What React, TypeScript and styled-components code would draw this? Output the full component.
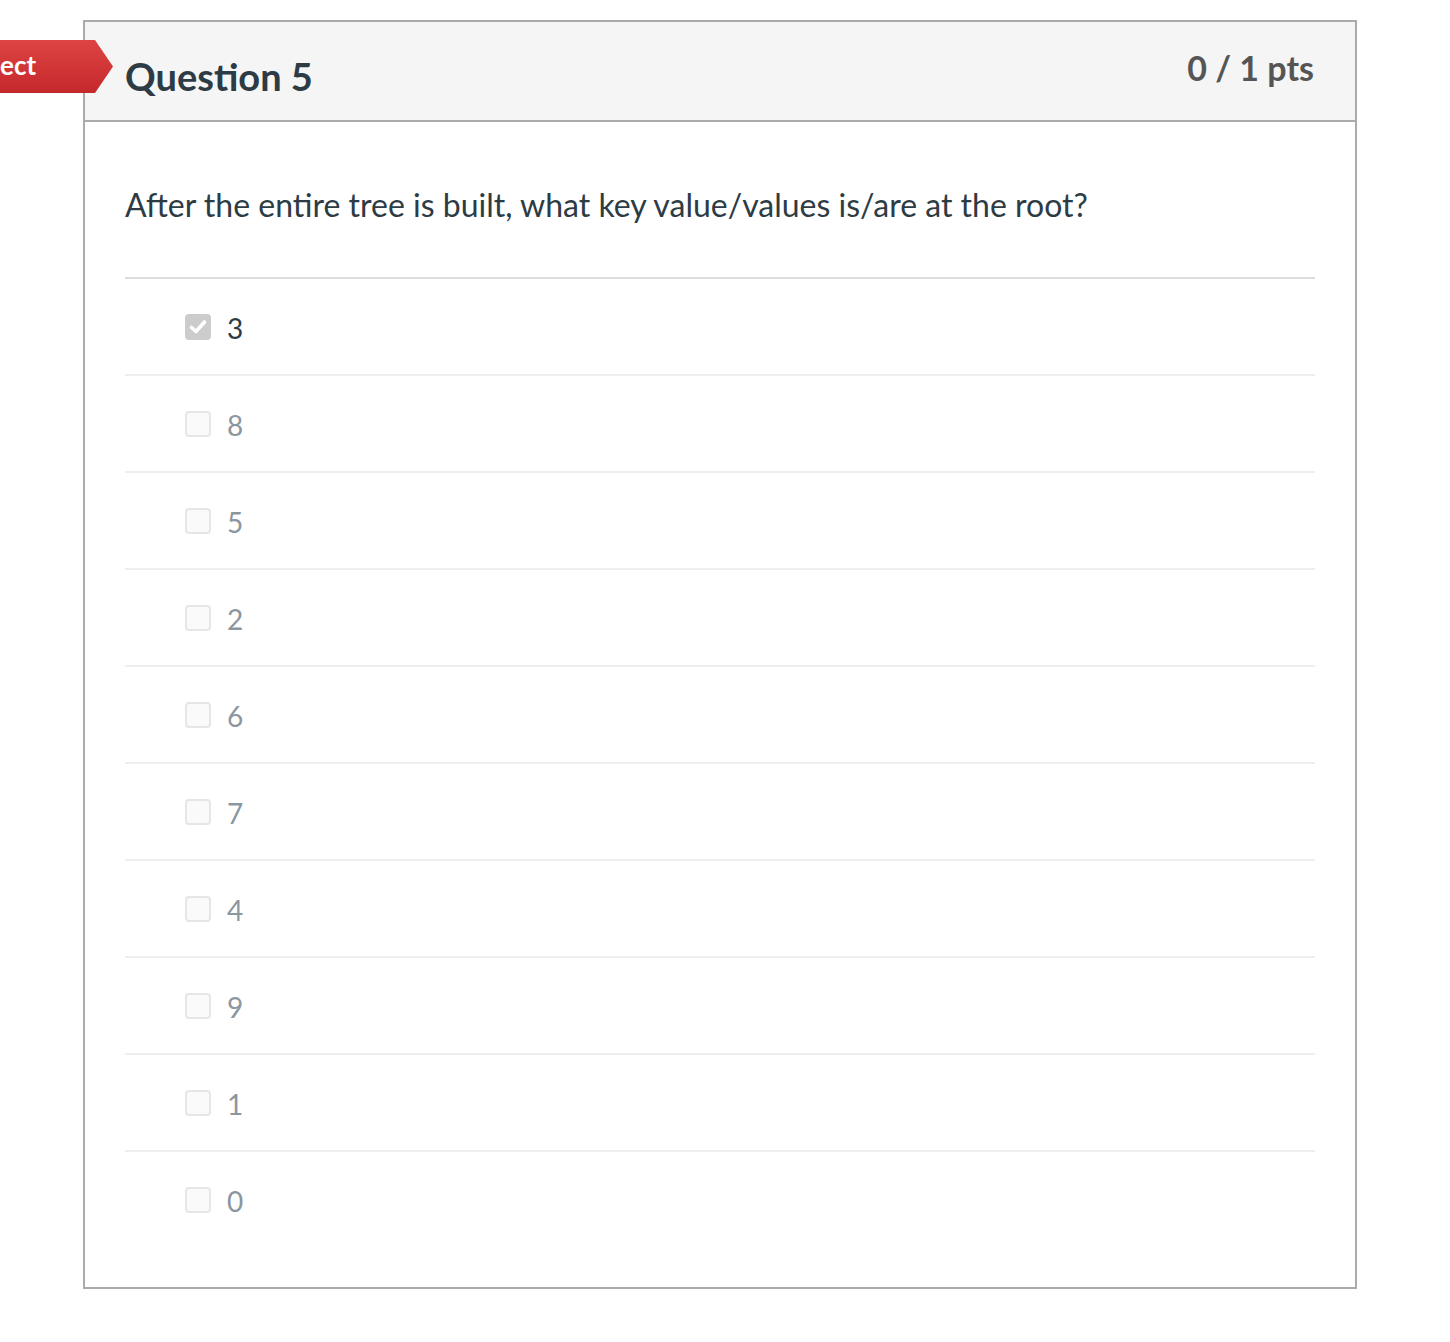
import styled, { createGlobalStyle } from 'styled-components'

const answers = ['3', '8', '5', '2', '6', '7', '4', '9', '1', '0']
const picked = '3'

export default function App() {
    return (
        <>
            <GlobalStyle />
            <Page>
                <Ribbon>ect</Ribbon>
                <Card>
                    <Header>
                        <Title>Question 5</Title>
                        <Points>0 / 1 pts</Points>
                    </Header>
                    <Body>
                        <QuestionText>
                            After the entire tree is built, what key value/values is/are at the root?
                        </QuestionText>
                        <Answers>
                            {answers.map((a, i) => (
                                <AnswerRow key={a} $first={i === 0}>
                                    <Box $checked={a === picked}>
                                        {a === picked && (
                                            <svg width="20" height="20" viewBox="0 0 20 20">
                                                <path d="M3.5 10.5 L8 14.5 L16.5 5" fill="none" stroke="#fff" strokeWidth="3.6" strokeLinecap="round" strokeLinejoin="round" />
                                            </svg>
                                        )}
                                    </Box>
                                    <AnswerLabel $checked={a === picked}>{a}</AnswerLabel>
                                </AnswerRow>
                            ))}
                        </Answers>
                    </Body>
                </Card>
            </Page>
        </>
    )
}

const GlobalStyle = createGlobalStyle`
    body {
        margin: 0;
        background: #fff;
        font-family: Lato, "Open Sans", sans-serif;
        color: #2d3b45;
    }
`

const Page = styled.div`
    position: relative;
    padding: 20px 0 40px 83px;
    overflow: hidden;
`

// the status flag hangs off the left edge of the window, over the card border
const Ribbon = styled.div`
    position: absolute;
    left: 0;
    top: 40px;
    height: 53px;
    width: 113px;
    box-sizing: border-box;
    display: flex;
    align-items: center;
    padding: 0 0 4px 0;
    color: #fff;
    font-weight: 700;
    font-size: 26px;
    background: linear-gradient(#df4444, #c4282a);
    clip-path: polygon(0 0, 95px 0, 113px 50%, 95px 100%, 0 100%);
    z-index: 2;
`

const Card = styled.div`
    width: 1274px;
    height: 1269px;
    box-sizing: border-box;
    border: 2px solid #aaaaaa;
    background: #fff;
`

const Header = styled.div`
    display: flex;
    justify-content: space-between;
    align-items: flex-start;
    height: 98px;
    padding: 0 41px 0 40px;
    background: #f5f5f5;
    border-bottom: 2px solid #aaaaaa;
`

const Title = styled.h2`
    margin: 32px 0 0;
    font-size: 38px;
    font-weight: 700;
    line-height: 44px;
    color: #2d3b45;
`

const Points = styled.div`
    margin-top: 26px;
    font-size: 34px;
    font-weight: 700;
    line-height: 40px;
    color: #555555;
`

const Body = styled.div`
    padding: 63px 40px 0;
`

const QuestionText = styled.p`
    margin: 0 0 52px;
    font-size: 32px;
    line-height: 40px;
    color: #2d3b45;
`

const Answers = styled.div`
    display: flex;
    flex-direction: column;
`

const AnswerRow = styled.div<{ $first: boolean }>`
    display: flex;
    align-items: center;
    height: 97px;
    box-sizing: border-box;
    padding-left: 60px;
    border-top: 2px solid ${p => (p.$first ? '#dddddd' : '#eeeeee')};
`

const Box = styled.div<{ $checked: boolean }>`
    width: 26px;
    height: 26px;
    box-sizing: border-box;
    border-radius: 4px;
    display: flex;
    align-items: center;
    justify-content: center;
    background: ${p => (p.$checked ? '#cccccc' : '#fafafa')};
    border: 2px solid ${p => (p.$checked ? '#cccccc' : '#e6e6e6')};
`

const AnswerLabel = styled.span<{ $checked: boolean }>`
    margin-left: 16px;
    padding-top: 2px;
    font-size: 28px;
    line-height: 36px;
    color: ${p => (p.$checked ? '#2d3b45' : '#8b969e')};
`
